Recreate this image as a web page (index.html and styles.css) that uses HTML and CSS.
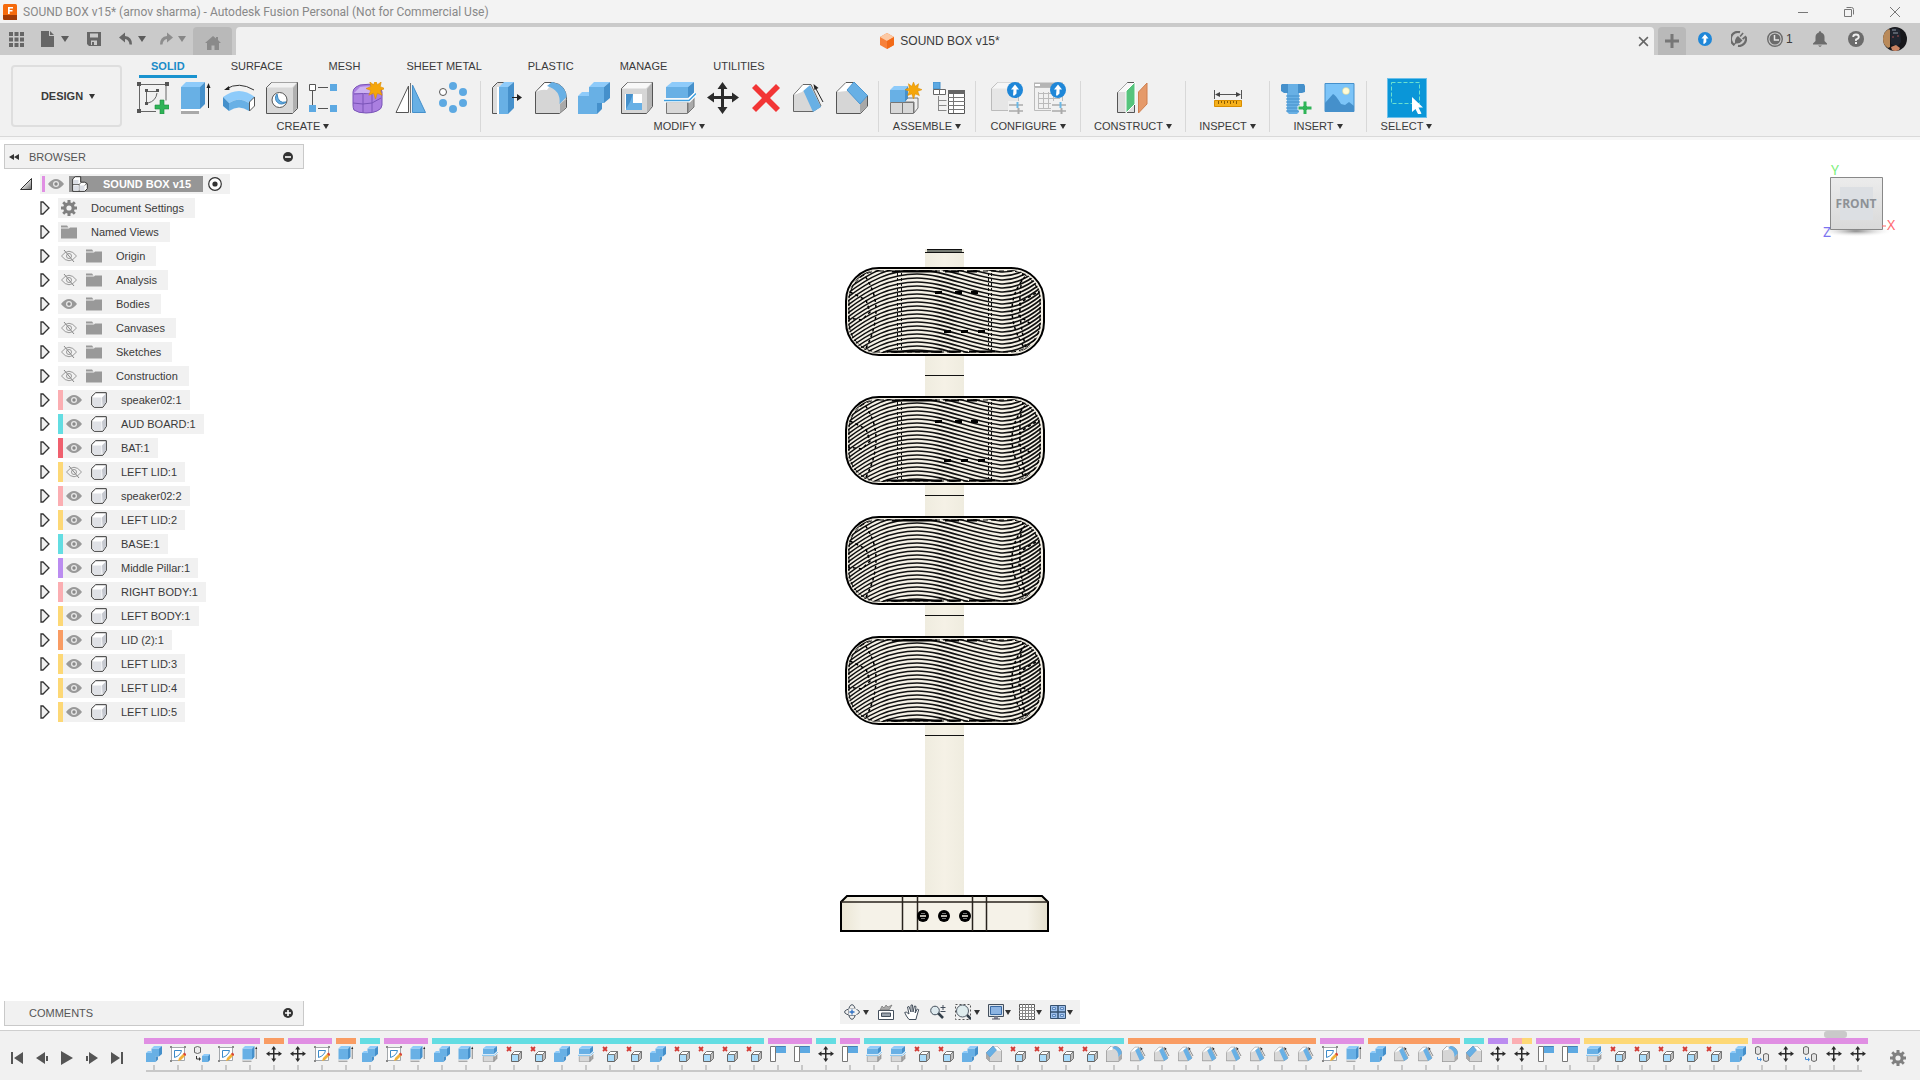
FILE: index.html
```html
<!DOCTYPE html>
<html lang="en">
<head>
<meta charset="utf-8">
<title>SOUND BOX v15* (arnov sharma) - Autodesk Fusion Personal (Not for Commercial Use)</title>
<link rel="stylesheet" href="styles.css">
</head>
<body>
<svg class="sprite" aria-hidden="true">
  <defs>
    <linearGradient id="expandFill" x1="0" y1="0" x2="1" y2="1"><stop offset="0.4" stop-color="#eee"/><stop offset="1" stop-color="#666"/></linearGradient>
  </defs>

  <!-- ribbon, 32 x 32 -->
  <symbol id="r-sketch" viewBox="0 0 32 32">
    <path d="M2.500 2v26M2 2.500h27v16M2 29.500h17" fill="none" stroke="#666"/>
    <path d="M9 9.500h11M9.500 9v12M20 11q-1 8-9 10" fill="none" stroke="#666"/>
    <path d="M0 0h4v4H0zM28 0h4v4h-4zM0 27h4v4H0zM8 7h3v3H8zM19 7h3v3h-3zM8 20h3v3H8z" fill="#555"/>
    <path d="M23 18h4v5h5v4h-5v5h-4v-5h-5v-4h5z" fill="#2fb457" stroke="#1c8a3d" stroke-width=".6"/>
  </symbol>
  <symbol id="r-extrude" viewBox="0 0 32 32">
    <path d="M1 27l5-5h18l-5 5v5H1z" fill="#a9a9a9"/><path d="M1 26h19v3H1z" fill="#fff"/>
    <path d="M1 5h19v22H1z" fill="#68b0e5"/><path d="M1 5l5-5h19l-5 5z" fill="#8ecbfa"/><path d="M20 5l5-5v22l-5 5z" fill="#4590cb"/>
    <path d="M28.500 4v22" stroke="#222"/><path d="M28.500 1l2 5h-4z" fill="#222"/>
  </symbol>
  <symbol id="r-revolve" viewBox="0 0 32 32">
    <path d="M3 7Q16-1 31 8" fill="none" stroke="#333"/><path d="M1 8l5-4 .5 4z" fill="#222"/>
    <path d="M0 15Q16 3 32 15l-6 6Q16 14 6 21z" fill="#8ecbfa"/><path d="M0 15l6 6v8l-6-5z" fill="#4590cb"/>
    <path d="M6 21Q16 14 26 21v8Q16 22 6 29z" fill="#68b0e5"/><path d="M26.500 20l5-5v9l-5 5z" fill="#fff" stroke="#555"/>
  </symbol>
  <symbol id="r-hole" viewBox="0 0 32 32">
    <path d="M.5 5.500l5-5h26v26l-5 5H.5z" fill="#d8d8d8" stroke="#555"/><path d="M1 5.500l5-5h25l-5 5z" fill="#f2f2f2"/><path d="M27 6l4-5v25l-4 5z" fill="#b0b0b0"/>
    <circle cx="13.500" cy="18" r="7.500" fill="#fff" stroke="#555"/><path d="M11 12a6 6 0 1 0 9 8q-8 2-9-8z" fill="#68b0e5" stroke="#3c85bd"/>
  </symbol>
  <symbol id="r-pattern" viewBox="0 0 32 32">
    <path d="M9 5.500h10M3.500 9v14M9 26.500h10" stroke="#555" fill="none"/>
    <path d="M.5 2.500h6v6h-6z" fill="#fff" stroke="#555"/><path d="M21 2h7v7h-7zM0 23h7v7H0zM21 23h7v7h-7z" fill="#5da9e2"/>
  </symbol>
  <symbol id="r-form" viewBox="0 0 32 32">
    <path d="M1 10q0-3 3-5l4-2q9-2 18 1 4 2 4 6v13q0 4-5 6-4 2-11 2-8 0-12-3-1-2-1-5z" fill="#aa7fe0" stroke="#7a54b8"/>
    <path d="M2 11l6-6q9-2 18 1l-6 7q-10-2-18-2z" fill="#cdb2f2"/><path d="M2 12q10-1 18 0v18M11 12v19M1 21q10 2 19 0l9-5M20 12l6-6" fill="none" stroke="#7a54b8"/>
    <use href="#star" x="14" y="-2" width="19" height="19"/>
  </symbol>
  <symbol id="star" viewBox="0 0 20 20"><path d="M10 0l2 5 4-3-1 5 5 2-5 2 2 5-5-2-2 6-2-6-5 2 2-5-5-2 5-2-1-5 4 3z" fill="#f5a60a" stroke="#d98a00" stroke-width=".6"/></symbol>
  <symbol id="r-mirror" viewBox="0 0 32 32">
    <path d="M15.500 1v30" stroke="#777"/><path d="M13.500 4v26.500H1z" fill="#fff" stroke="#555"/><path d="M17.500 3v27.500h13z" fill="#68b0e5" stroke="#4590cb"/>
  </symbol>
  <symbol id="r-circular" viewBox="0 0 32 32">
    <g fill="#5da9e2"><circle cx="15" cy="4" r="4"/><circle cx="25" cy="10" r="4"/><circle cx="25" cy="21" r="4"/><circle cx="15" cy="27" r="4"/><circle cx="5" cy="21" r="4"/></g><circle cx="5" cy="10" r="3.500" fill="#fff" stroke="#555"/>
  </symbol>
  <symbol id="r-press" viewBox="0 0 32 32">
    <path d="M.5 5.500l5-5h7v31H.5z" fill="#ddd" stroke="#555"/><path d="M6 5v27" stroke="#fff" stroke-width="2"/>
    <path d="M7 5h9v27H7z" fill="#68b0e5"/><path d="M7 5l5-5h10l-6 5z" fill="#8ecbfa"/><path d="M16 5l6-5v26l-6 6z" fill="#4590cb"/>
    <path d="M20 15.500h6" stroke="#222"/><path d="M25 12l5 3.500-5 3.500z" fill="#222"/>
  </symbol>
  <symbol id="r-fillet" viewBox="0 0 32 32">
    <path d="M.5 10l9-9.500h8q14 2 14 17v8l-7 6H.5z" fill="#d6d6d6" stroke="#555"/><path d="M1 10l9-9h7l-5 7q-6-1-11 2z" fill="#fff"/><path d="M25 22l6-5v8l-6 6z" fill="#aaa"/>
    <path d="M12 4l5-4q14 3 14.500 15l-7 7Q26 8 12 4z" fill="#68b0e5"/>
  </symbol>
  <symbol id="r-combine" viewBox="0 0 32 32">
    <path d="M0 14h11V5h15v16h-7v11H0z" fill="#68b0e5"/><path d="M0 14l4-4h7v4zM11 5l5-5h16l-6 5z" fill="#8ecbfa"/><path d="M26 5l6-5v16l-6 5zM19 21h5v6l-5 5z" fill="#4590cb"/>
  </symbol>
  <symbol id="r-shell" viewBox="0 0 32 32">
    <path d="M.5 6.500l6-6h25v24l-6 7H.5z" fill="#d6d6d6" stroke="#555"/><path d="M1 6.500l6-6h24l-6 6z" fill="#f8f8f8"/><path d="M26 7l5-6v23l-5 7z" fill="#b4b4b4"/>
    <path d="M4 12h17v16H4z" fill="#fff"/><path d="M5 12h7v9h9v7H5z" fill="#68b0e5"/><path d="M5 12h7l-3 8-4 7z" fill="#4590cb"/>
  </symbol>
  <symbol id="r-split" viewBox="0 0 32 32">
    <path d="M2.500 20h21v11.500H2.500z" fill="#d8d8d8" stroke="#777"/><path d="M24 20l6-6v11l-6 6z" fill="#aaa" stroke="#777"/>
    <path d="M2 5h22v11H2z" fill="#68b0e5"/><path d="M2 5l6-5h22l-6 5z" fill="#8ecbfa"/><path d="M24 5l6-5v11l-6 5z" fill="#4590cb"/>
    <path d="M0 18.500h25l7-7" fill="none" stroke="#fff" stroke-width="4"/><path d="M0 18.500h25l7-7" fill="none" stroke="#3d9fe0" stroke-width="1.500"/>
  </symbol>
  <symbol id="r-move" viewBox="0 0 32 32"><path d="M15.500 0l5 7h-3.500v7h8v-3.500l7 5-7 5V17h-8v8h3.500l-5 7-5-7H14v-8H7v3.500l-7-5 7-5V14h7V7h-3.500z" fill="#2b2b2b"/></symbol>
  <symbol id="r-delete" viewBox="0 0 32 32"><path d="M2 6l4-4 10 10L26 2l4 4-10 10 10 10-4 4-10-10L6 30l-4-4 10-10z" fill="#f23535"/></symbol>
  <symbol id="r-draft" viewBox="0 0 32 32">
    <path d="M.5 13L10 2.500h8L28 24l-8 5.500H.5z" fill="#d8d8d8" stroke="#666"/><path d="M10 8l7-5 11 22-8 5z" fill="#68b0e5"/><path d="M1 13l9-10 7 0-8 7z" fill="#fff"/>
    <path d="M30 20L22.500 6" stroke="#222"/><path d="M20.500 2l5 4-4 2z" fill="#222"/>
  </symbol>
  <symbol id="r-chamfer" viewBox="0 0 32 32">
    <path d="M.5 10L10 .5h8L31.500 14v10l-7 7.500H.5z" fill="#d6d6d6" stroke="#555"/><path d="M1 10l9-9h7l-6 8z" fill="#fff"/><path d="M24 21l7-7v10l-7 7z" fill="#a8a8a8"/><path d="M11 8l7-8 13.500 13.500L24 22z" fill="#68b0e5" stroke="#4d98d2"/>
  </symbol>
  <symbol id="r-newcomp" viewBox="0 0 32 32">
    <path d="M.5 20.500h12v11H.5zM12.500 20.500h11v11h-11z" fill="#d8d8d8" stroke="#777"/><path d="M13 20l5-4h10v10l-4 5V20z" fill="#eee" stroke="#777"/>
    <path d="M0 8h15v12H0z" fill="#68b0e5"/><path d="M0 8l4-4h14l-3 4z" fill="#8ecbfa"/><path d="M15 8l3-4v12l-3 4z" fill="#4590cb"/><use href="#star" x="15" y="0" width="17" height="17"/>
  </symbol>
  <symbol id="r-bom" viewBox="0 0 32 32">
    <path d="M0 0h7v7H0z" fill="#5da9e2" stroke="#4590cb"/><path d="M.5 7.500h6v5h-6zM6.500 7.500h6v5h-6z" fill="#fff" stroke="#666"/><path d="M5.500 14v15M5.500 18.500h8M5.500 23.500h8M5.500 28.500h8" stroke="#888" fill="none"/>
    <path d="M15.500 9.500h16v22h-16z" fill="#fff" stroke="#555"/><path d="M15 8h17v4H15z" fill="#666"/><path d="M15 15.500h17M15 19.500h17M15 23.500h17M15 27.500h17M20.500 12v19" stroke="#777"/>
  </symbol>
  <symbol id="badge-up" viewBox="0 0 16 16"><circle cx="8" cy="8" r="8" fill="#1f87d8"/><path d="M8 2.500l4 5H9.500v4l-2 2H6l.5-6H4z" fill="#fff"/></symbol>
  <symbol id="sliders" viewBox="0 0 14 12"><path d="M0 3h14M0 9h14" stroke="#aaa" stroke-width="1.500"/><path d="M8.500 0v6" stroke="#6ab8e6" stroke-width="2"/><path d="M9.500 6v6" stroke="#aaa" stroke-width="2"/></symbol>
  <symbol id="r-configure" viewBox="0 0 32 32">
    <path d="M.5 6.500l6-6h21v22l-6 6H.5z" fill="#e6e6e6" stroke="#bbb"/><path d="M1 6.500l6-6h20l-6 6z" fill="#f6f6f6"/><use href="#badge-up" x="16" y="0" width="16" height="16"/><path d="M17 19h15v13H17z" fill="#f1f1f1"/><use href="#sliders" x="18" y="20" width="14" height="12"/>
  </symbol>
  <symbol id="r-table" viewBox="0 0 32 32">
    <path d="M0 .5h29v5H0z" fill="#b5b5b5"/><path d="M.5 5.500h28v23H.5zM4 11.500h22M4 16.500h22M4 21.500h16M4 26.500h16M4.500 10v16M9.500 10v16M14.500 10v16M19.500 10v16" fill="none" stroke="#bbb"/><path d="M1 2h5v2H1z" fill="#fff"/><use href="#badge-up" x="16" y="0" width="16" height="16"/><path d="M17 19h15v13H17z" fill="#f1f1f1"/><use href="#sliders" x="18" y="20" width="14" height="12"/>
  </symbol>
  <symbol id="r-plane" viewBox="0 0 32 32">
    <path d="M.5 10.500l10-10h7v30H.5z" fill="#ddd" stroke="#555"/><path d="M1 10l9-9h7l-8 9z" fill="#f8f8f8"/><path d="M9 9l9-9v22l-9 9z" fill="#55c47c" stroke="#fff"/><path d="M21.500 10l8.500-9v21l-8.500 9z" fill="#e59a6a" stroke="#cf7f4e"/>
  </symbol>
  <symbol id="r-measure" viewBox="0 0 32 32">
    <path d="M2.500 8v9M29.500 8v9M4 12.500h24" stroke="#555"/><path d="M3 12.500l5-2.500v5zM29 12.500L24 10v5z" fill="#444"/><path d="M2.500 18.500h27v6h-27z" fill="#f5b01c" stroke="#d98e00"/><path d="M6.500 19v3M9.500 19v2M12.500 19v3M15.500 19v2M18.500 19v3M21.500 19v2M24.500 19v3" stroke="#8a5c00"/>
  </symbol>
  <symbol id="r-bolt" viewBox="0 0 32 32">
    <path d="M1 2h22l1 2v6l-3 1H3L0 9V3z" fill="#4590cb"/><path d="M7 2h10v9H7z" fill="#68b0e5"/><path d="M6 11h12v19l-2 2H8l-2-2z" fill="#68b0e5"/><path d="M5 14h14M5 17h14M5 20h14M5 23h14M5 26h14M5 29h13" stroke="#4590cb"/>
    <path d="M22 19h4v5h5v4h-5v5h-4v-5h-5v-4h5z" fill="#2fb457" stroke="#f1f1f1"/>
  </symbol>
  <symbol id="r-image" viewBox="0 0 32 32"><path d="M1 1.500h29v28H1z" fill="#7cc4f8" stroke="#4590cb"/><circle cx="22" cy="9" r="3.500" fill="#fffbd6" stroke="#d8d08a" stroke-width=".5"/><path d="M1 21l8-9q2 0 8 10l4 1 4-3 5 4v6H1z" fill="#4590cb"/></symbol>
  <symbol id="r-select" viewBox="0 0 32 32"><path d="M.5 .5h28v21H.5z" fill="none" stroke="#6be0cf" stroke-dasharray="4 2"/><path d="M21 15v15l3.500-3 3 6 3-1.500-3-6h4.500z" fill="#fff"/></symbol>

  <!-- application bar and panels -->
  <symbol id="a-logo" viewBox="0 0 14 16"><path d="M0 1.500Q0 0 1.500 0h11Q14 0 14 1.500V16H1.500Q0 16 0 14.500z" fill="#f56a0c"/><path d="M0 11h14v5H1.500Q0 16 0 14z" fill="#a13a05"/><path d="M5 3h5v1.500H6.700v1.500H9.500v1.500H6.700V10H5z" fill="#fff"/></symbol>
  <symbol id="a-grid" viewBox="0 0 15 15"><path d="M0 0h4v4H0zM5.500 0h4v4h-4zM11 0h4v4h-4zM0 5.500h4v4H0zM5.500 5.500h4v4h-4zM11 5.500h4v4h-4zM0 11h4v4H0zM5.500 11h4v4h-4zM11 11h4v4h-4z" fill="#666"/></symbol>
  <symbol id="a-file" viewBox="0 0 14 16"><path d="M0 0h8v5h5v11H0z" fill="#666"/><path d="M9 0l4 4H9z" fill="#666"/></symbol>
  <symbol id="a-save" viewBox="0 0 14 14"><path d="M0 0h14v14H2l-2-2z" fill="#666"/><path d="M3 1.500h8v4H3zM4 8.500h6V13H4z" fill="#cacaca"/><path d="M5 10h2v3H5z" fill="#666"/></symbol>
  <symbol id="a-undo" viewBox="0 0 14 13"><path d="M0 5l6-5v3.500Q13 4 13 12h-2.500Q10 7 6 6.500V10z" fill="#666"/></symbol>
  <symbol id="a-home" viewBox="0 0 16 14"><path d="M8 0l3 2.500V1h2v3l3 3h-2v7H9.500V9.500h-3V14H2V7H0z" fill="#8a8a8a"/></symbol>
  <symbol id="a-cube" viewBox="0 0 14 16"><path d="M7 0l7 4v8l-7 4-7-4V4z" fill="#f7813a"/><path d="M7 0l7 4-7 4-7-4z" fill="#fcc9a4"/><path d="M7 8l7-4v8l-7 4z" fill="#f26a18"/></symbol>
  <symbol id="a-close" viewBox="0 0 10 10"><path d="M1 1l8 8M9 1L1 9" stroke="currentColor" stroke-width="1.400"/></symbol>
  <symbol id="a-plus" viewBox="0 0 14 14"><path d="M5.500 0h3v5.500H14v3H8.500V14h-3V8.500H0v-3h5.500z" fill="#777"/></symbol>
  <symbol id="a-plug" viewBox="0 0 16 16"><path d="M3.500 14A7 7 0 0 1 9 1.200M14.700 6A7 7 0 0 1 7 14.900" fill="none" stroke="#6b6b6b" stroke-width="2.200"/><path d="M2 14.500l2-3q-.5-4 3-6.500l4.500 4.500q-2.500 3.500-6.500 3l-2 2zM8.500 5l3-3.500 1.200 1-3 3.500zM11 7.500l3.500-3 1 1.200-3.300 3z" fill="#6b6b6b"/></symbol>
  <symbol id="a-clock" viewBox="0 0 16 16"><circle cx="8" cy="8" r="7.300" fill="none" stroke="#6b6b6b" stroke-width="1.400"/><circle cx="8" cy="8" r="5.500" fill="#6b6b6b"/><path d="M7.500 4v5H12" fill="none" stroke="#e5e5e5" stroke-width="1.500"/></symbol>
  <symbol id="a-bell" viewBox="0 0 14 16"><path d="M7 0q1 0 1.200 1.500Q11.500 2.500 11.500 6v4L14 12.500v1H0v-1L2.500 10V6q0-3.500 3.300-4.500Q6 0 7 0zM5 14.500h4L7 16z" fill="#6b6b6b"/></symbol>
  <symbol id="a-help" viewBox="0 0 16 16"><circle cx="8" cy="8" r="8" fill="#6b6b6b"/><path d="M5.200 6Q5.200 3.500 8 3.500T10.800 6Q10.800 7.500 8 8.500v1.500" fill="none" stroke="#eee" stroke-width="1.800"/><path d="M7 11h2v2H7z" fill="#eee"/></symbol>
  <symbol id="a-avatar" viewBox="0 0 24 24"><circle cx="12" cy="12" r="12" fill="#17171b"/><path d="M6 2Q0 5 0 12q0 6 5 9l2-1V3z" fill="#b98a5a"/><path d="M7 3q5-4 10 0l1 12-4 5-6-3z" fill="#20252f"/><path d="M8 20l5-2 4 3-1 2q-4 2-7 0z" fill="#c98462"/><path d="M9 3h4M10 6h5" stroke="#8f99a5"/><path d="M9 10h2M14 9h2" stroke="#a44c4c"/></symbol>
  <symbol id="p-collapse" viewBox="0 0 10 6"><path d="M5 0v6L0 3zM10 0v6L5 3z" fill="#333"/></symbol>
  <symbol id="p-minus" viewBox="0 0 10 10"><circle cx="5" cy="5" r="5" fill="#333"/><path d="M2 4.200h6v1.600H2z" fill="#fff"/></symbol>
  <symbol id="p-plus" viewBox="0 0 10 10"><circle cx="5" cy="5" r="5" fill="#333"/><path d="M2 4.200h6v1.600H2zM4.200 2h1.600v6H4.200z" fill="#fff"/></symbol>

  <!-- browser tree -->
  <symbol id="t-open" viewBox="0 0 12 12"><path d="M11.500 .5v11H.5z" fill="url(#expandFill)" stroke="#333"/></symbol>
  <symbol id="t-shut" viewBox="0 0 10 14"><path d="M1 1h2l6 6-6 6H1z" fill="#f0f0f0" stroke="#333" stroke-width="1.300"/></symbol>
  <symbol id="t-eye" viewBox="0 0 16 10"><path d="M0 5Q8-5 16 5 8 15 0 5z" fill="#999"/><circle cx="8" cy="5" r="3" fill="#e8e8e8"/><circle cx="8" cy="5" r="1.700" fill="#888"/></symbol>
  <symbol id="t-hidden" viewBox="0 0 16 12"><path d="M.5 6Q8-3.500 15.500 6 8 15.500 .5 6z" fill="none" stroke="#999"/><circle cx="8" cy="6" r="2.500" fill="none" stroke="#999"/><path d="M3 0l10 12" stroke="#888"/></symbol>
  <symbol id="t-folder" viewBox="0 0 16 13"><path d="M0 0h6l1.500 2H0zM0 3h8l1-1h7v11H0z" fill="#999"/></symbol>
  <symbol id="t-gear" viewBox="0 0 16 16"><path d="M6.500 0h3v2.500l1.500.6 1.800-1.800 2 2L13 5l.6 1.500H16v3h-2.400L13 11l1.800 1.800-2 2L11 13l-1.500.6V16h-3v-2.400L5 13l-1.800 1.800-2-2L3 11l-.6-1.500H0v-3h2.400L3 5 1.200 3.200l2-2L5 3.100l1.500-.6z" fill="#808080"/><circle cx="8" cy="8" r="2.600" fill="#f0f0f0"/></symbol>
  <symbol id="t-body" viewBox="0 0 16 16"><path d="M.7 4.500l4-3.800h10.600v9.800l-3.500 4.800H3.200L.7 13z" fill="#fff" stroke="#333"/><path d="M2 5.500h8.500v9H3.500L2 13z" fill="#dfe1e6"/><path d="M11 5.500l4-4v9l-3.500 4z" fill="#c6c9d0"/></symbol>
  <symbol id="t-assembly" viewBox="0 0 16 16"><path d="M.7 3l2.500-2.300h5.500v5.500h4l2.600 1.500v5l-2.600 2.600H.7z" fill="#fff" stroke="#333"/><path d="M.7 8.500h6.500v6.800M7.200 8.500l1.800-2M12.500 9.500l2.500-2" fill="none" stroke="#333" stroke-width=".7"/><path d="M1.500 4h5v4h-5zM1.500 9.500h5v5h-5zM7.500 9.500h5v5h-5z" fill="#dcdfe6"/></symbol>
  <symbol id="t-radio" viewBox="0 0 14 14"><circle cx="7" cy="7" r="6.300" fill="#fff" stroke="#333" stroke-width="1.200"/><circle cx="7" cy="7" r="2.600" fill="#333"/></symbol>

  <!-- navigation bar, 16 x 16 -->
  <symbol id="n-orbit" viewBox="0 0 16 16"><ellipse cx="8" cy="8" rx="3.500" ry="7.300" fill="none" stroke="#444f5c"/><ellipse cx="8" cy="8" rx="7.400" ry="3.200" fill="none" stroke="#444f5c"/><path d="M4.500 4.500h8v6.500h-8z" fill="#f1f1f1"/><path d="M8 5.500v5M5.500 8h5" stroke="#2c6fc4" stroke-width="1.300"/></symbol>
  <symbol id="n-look" viewBox="0 0 16 16"><path d="M.5 6.500h15v9H.5z" fill="#fff" stroke="#444f5c"/><path d="M3.500 9h9v3.500h-9z" fill="#9aa3ad" stroke="#444f5c"/><path d="M2 6l2-4 2 2 2-3 2 2 4-2-3 5z" fill="#aaa" stroke="#666" stroke-width=".6"/></symbol>
  <symbol id="n-pan" viewBox="0 0 16 16"><path d="M5 15.500Q2 12 .7 8.500l1.500-.5L5 10 3.500 3l1.500-.5L7 8V1h1.500l.5 7 1.500-6 1.500.4L11.200 9l2-4 1.500.7L12.500 13l-.5 2.500z" fill="#fff" stroke="#444f5c"/></symbol>
  <symbol id="n-zoom" viewBox="0 0 16 16"><path d="M8 9l5 5" stroke="#333f4a" stroke-width="2.600"/><circle cx="5" cy="6.500" r="4.300" fill="#dde9ee" stroke="#444f5c"/><path d="M10.500 3.500h5M13 1v5M10.500 7.500h5" stroke="#444f5c"/></symbol>
  <symbol id="n-fit" viewBox="0 0 16 16"><path d="M.5 .5h15v15H.5z" fill="none" stroke="#555" stroke-dasharray="2 2"/><path d="M11 10l5 5" stroke="#333f4a" stroke-width="2.600"/><circle cx="7.500" cy="7" r="6" fill="#dfecee" stroke="#555f6a"/></symbol>
  <symbol id="n-display" viewBox="0 0 16 16"><path d="M.5 .5h15v12H.5z" fill="#dce3ea" stroke="#444f5c"/><path d="M2.500 2.500h11v8h-11z" fill="#8db4e3" stroke="#3a6aa5"/><path d="M6 12.500h4v2.500H6z" fill="#889"/><path d="M4 15h8" stroke="#556"/></symbol>
  <symbol id="n-grid" viewBox="0 0 16 16"><path d="M.5 .5h15v15H.5z" fill="#fff" stroke="#555"/><path d="M3.500 0v16M6.500 0v16M9.500 0v16M12.500 0v16M0 3.500h16M0 6.500h16M0 9.500h16M0 12.500h16" stroke="#888"/></symbol>
  <symbol id="n-views" viewBox="0 0 16 14"><path d="M.5 .5h15v13H.5z" fill="#9ec0ec" stroke="#35506f"/><path d="M8 0v14M0 7h16" stroke="#35506f" stroke-width="1.500"/><path d="M2.500 2.500h3v2h-3zM10.500 2.500h3v2h-3zM2.500 9.500h3v2h-3zM10.500 9.500h3v2h-3z" fill="#c5dbf5" stroke="#5c87bd"/></symbol>

  <!-- timeline, 16 x 16 -->
  <symbol id="f-sketch" viewBox="0 0 16 16"><path d="M1.500 1.500h13v13h-13z" fill="#fff" stroke="#a3a7ab"/><path d="M4.500 4.500h7q-1 5-7 7z" fill="none" stroke="#3a8ac9"/><path d="M0 0h2v2H0zM14 0h2v2h-2zM0 14h2v2H0z" fill="#888"/><path d="M9 12l5-5 2 2-5 5-3 1z" fill="#f2b23a"/><path d="M13 8l1.500-1.500 2 2L15 10z" fill="#d8463c"/></symbol>
  <symbol id="f-copy" viewBox="0 0 16 16"><path d="M.5 1.500q3-2 6 0v5q-3 2-6 0z" fill="#ececec" stroke="#666"/><path d="M2.500 10v3h3" fill="none" stroke="#333"/><path d="M5 11l2 2-2 2z" fill="#333"/><path d="M8 10h6v6H8z" fill="#68b0e5"/><path d="M8 10l2-2h6l-2 2z" fill="#8ecbfa"/><path d="M14 10l2-2v6l-2 2z" fill="#4590cb"/></symbol>
  <symbol id="f-remove" viewBox="0 0 16 16"><path d="M1 1l4 4M5 1L1 5" stroke="#d33a34" stroke-width="1.800"/><path d="M5.500 8.500h7v7h-7z" fill="#a9dcfb" stroke="#666"/><path d="M5.500 8.500l3-3h7l-3 3z" fill="#fff" stroke="#777"/><path d="M12.500 8.500l3-3v7l-3 3z" fill="#bbb" stroke="#777"/></symbol>
  <symbol id="f-plane" viewBox="0 0 16 16"><path d="M.5 .5h5v15h-5z" fill="#fff" stroke="#777"/><path d="M6 0h10v7H6z" fill="#5da9e2"/><path d="M5.500 .5h10" stroke="#4380b3"/></symbol>
  <symbol id="f-joint" viewBox="0 0 16 16"><path d="M1.500 1.500q2.500-2 5 0v6q-2.500 2-5 0zM9.500 8.500q2.500-2 5 0v6q-2.500 2-5 0z" fill="#e4e4e4" stroke="#666"/><path d="M3.500 11v2.500h3" fill="none" stroke="#4a8fd8"/><path d="M6 11.500l2 2-2 2z" fill="#4a8fd8"/></symbol>
  <symbol id="f-first" viewBox="0 0 12 12"><path d="M0 0h2v12H0zM12 0v12L3 6z" fill="#555"/></symbol>
  <symbol id="f-back" viewBox="0 0 12 12"><path d="M9 0v12L0 6zM10 4h2v5h-2z" fill="#555"/></symbol>
  <symbol id="f-play" viewBox="0 0 12 14"><path d="M0 0l12 7-12 7z" fill="#555"/></symbol>
</svg>

<header class="titlebar">
  <svg class="titlebar-logo"><use href="#a-logo"/></svg>
  <span class="titlebar-text">SOUND BOX v15* (arnov sharma) - Autodesk Fusion Personal (Not for Commercial Use)</span>
  <div class="window-controls">
    <button aria-label="Minimize"><svg viewBox="0 0 10 10"><path d="M0 5.500h10" stroke="#777"/></svg></button>
    <button aria-label="Restore"><svg viewBox="0 0 10 10"><path d="M.5 2.500h7v7h-7zM2.500 .5h5q2 0 2 2v5" fill="none" stroke="#777"/></svg></button>
    <button aria-label="Close"><svg viewBox="0 0 10 10"><path d="M0 0l10 10M10 0L0 10" stroke="#777"/></svg></button>
  </div>
</header>

<div class="appbar">
  <div class="quick">
    <button aria-label="Show data panel"><svg class="i15"><use href="#a-grid"/></svg></button>
    <button aria-label="File" class="quick-file"><svg class="i16"><use href="#a-file"/></svg><span class="caret"></span></button>
    <button aria-label="Save" class="quick-save"><svg class="i14"><use href="#a-save"/></svg></button>
    <button aria-label="Undo"><svg class="i14"><use href="#a-undo"/></svg><span class="caret"></span></button>
    <button aria-label="Redo" class="redo" disabled><svg class="i14"><use href="#a-undo"/></svg><span class="caret"></span></button>
  </div>
  <button class="home-tab" aria-label="Home"><svg class="i16"><use href="#a-home"/></svg></button>
  <div class="doc-tab">
    <span class="doc-name"><svg class="i16"><use href="#a-cube"/></svg>SOUND BOX v15*</span>
    <button class="doc-close" aria-label="Close document"><svg class="i11"><use href="#a-close"/></svg></button>
  </div>
  <button class="new-tab" aria-label="New document"><svg class="i14"><use href="#a-plus"/></svg></button>
  <div class="account">
    <button aria-label="Updates"><svg class="i14"><use href="#badge-up"/></svg></button>
    <button aria-label="Extensions"><svg class="i16"><use href="#a-plug"/></svg></button>
    <button aria-label="Job status" class="jobs"><svg class="i16"><use href="#a-clock"/></svg>1</button>
    <button aria-label="Notifications"><svg class="i16"><use href="#a-bell"/></svg></button>
    <button aria-label="Help"><svg class="i16"><use href="#a-help"/></svg></button>
    <button aria-label="Account" class="avatar"><svg><use href="#a-avatar"/></svg></button>
  </div>
</div>

<section class="ribbon">
  <button class="workspace">DESIGN<span class="caret"></span></button>
  <div class="ribbon-main">
    <nav class="modes">
      <button class="mode is-active">SOLID</button><button class="mode">SURFACE</button><button class="mode">MESH</button><button class="mode">SHEET METAL</button><button class="mode">PLASTIC</button><button class="mode">MANAGE</button><button class="mode">UTILITIES</button>
    </nav>
    <div class="groups">
      <div class="group">
        <div class="tools">
          <button aria-label="Create Sketch"><svg><use href="#r-sketch"/></svg></button><button aria-label="Extrude"><svg><use href="#r-extrude"/></svg></button><button aria-label="Revolve"><svg><use href="#r-revolve"/></svg></button><button aria-label="Hole"><svg><use href="#r-hole"/></svg></button><button aria-label="Rectangular Pattern"><svg><use href="#r-pattern"/></svg></button><button aria-label="Create Form"><svg><use href="#r-form"/></svg></button><button aria-label="Mirror"><svg><use href="#r-mirror"/></svg></button><button aria-label="Circular Pattern"><svg><use href="#r-circular"/></svg></button>
        </div>
        <button class="caption">CREATE<span class="caret"></span></button>
      </div>
      <div class="group">
        <div class="tools">
          <button aria-label="Press Pull"><svg><use href="#r-press"/></svg></button><button aria-label="Fillet"><svg><use href="#r-fillet"/></svg></button><button aria-label="Combine"><svg><use href="#r-combine"/></svg></button><button aria-label="Shell"><svg><use href="#r-shell"/></svg></button><button aria-label="Split Body"><svg><use href="#r-split"/></svg></button><button aria-label="Move/Copy"><svg><use href="#r-move"/></svg></button><button aria-label="Delete"><svg><use href="#r-delete"/></svg></button><button aria-label="Draft"><svg><use href="#r-draft"/></svg></button><button aria-label="Chamfer"><svg><use href="#r-chamfer"/></svg></button>
        </div>
        <button class="caption">MODIFY<span class="caret"></span></button>
      </div>
      <div class="group">
        <div class="tools"><button aria-label="New Component"><svg><use href="#r-newcomp"/></svg></button><button aria-label="Bill of Materials"><svg><use href="#r-bom"/></svg></button></div>
        <button class="caption">ASSEMBLE<span class="caret"></span></button>
      </div>
      <div class="group group--wide">
        <div class="tools"><button aria-label="Configure"><svg><use href="#r-configure"/></svg></button><button aria-label="Configuration Table"><svg><use href="#r-table"/></svg></button></div>
        <button class="caption">CONFIGURE<span class="caret"></span></button>
      </div>
      <div class="group group--wide">
        <div class="tools"><button aria-label="Offset Plane"><svg><use href="#r-plane"/></svg></button></div>
        <button class="caption">CONSTRUCT<span class="caret"></span></button>
      </div>
      <div class="group group--narrow">
        <div class="tools"><button aria-label="Measure"><svg><use href="#r-measure"/></svg></button></div>
        <button class="caption">INSPECT<span class="caret"></span></button>
      </div>
      <div class="group">
        <div class="tools"><button aria-label="Insert Fastener"><svg><use href="#r-bolt"/></svg></button><button aria-label="Insert Canvas"><svg><use href="#r-image"/></svg></button></div>
        <button class="caption">INSERT<span class="caret"></span></button>
      </div>
      <div class="group group--last">
        <div class="tools"><button aria-label="Select" class="select-tool"><svg><use href="#r-select"/></svg></button></div>
        <button class="caption">SELECT<span class="caret"></span></button>
      </div>
    </div>
  </div>
</section>

<main class="workarea">
  <aside class="browser">
    <div class="panel-head"><button aria-label="Collapse"><svg class="i10"><use href="#p-collapse"/></svg></button><span>BROWSER</span><button aria-label="Minimize panel"><svg class="i10"><use href="#p-minus"/></svg></button></div>
    <ul class="tree" id="tree">
      <li class="root"><svg class="i12"><use href="#t-open"/></svg><div class="node"><i class="bar magenta"></i><svg class="i16"><use href="#t-eye"/></svg><span class="root-name"><svg class="i18"><use href="#t-assembly"/></svg>SOUND BOX v15</span><svg class="i14"><use href="#t-radio"/></svg></div></li>
    </ul>
  </aside>

  <svg class="model" viewBox="0 0 215 700" role="img" aria-label="Front view of the sound box">
    <defs>
      <linearGradient id="pillar"><stop offset="0" stop-color="#efecdf"/><stop offset=".5" stop-color="#f5f1e6"/><stop offset="1" stop-color="#efecdf"/></linearGradient>
      <linearGradient id="base"><stop offset="0" stop-color="#ebe6d4"/><stop offset=".1" stop-color="#f5f2e8"/><stop offset=".9" stop-color="#f5f2e8"/><stop offset="1" stop-color="#e4dfcc"/></linearGradient>
      <clipPath id="grille"><rect x="11" y="30" width="193" height="83" rx="30"/></clipPath>
      <path id="wave" d="M6 31C32 10 54 0 80 0S132 14 164 18Q184 19 208 -2" fill="none" stroke="#111" stroke-width="1.600"/>
      <g id="wave2"><use href="#wave"/><use href="#wave" y="4"/></g>
      <g id="wave4"><use href="#wave2"/><use href="#wave2" y="8"/></g>
      <g id="wave8"><use href="#wave4"/><use href="#wave4" y="16"/></g>
      <g id="wave16"><use href="#wave8"/><use href="#wave8" y="32"/></g>
      <g id="speaker">
        <rect x="9" y="28" width="198" height="87" rx="33" fill="#f5f1e6" stroke="#000" stroke-width="2"/>
        <g clip-path="url(#grille)">
          <use href="#wave16" y="-2"/><use href="#wave16" y="62"/>
          <g fill="none" stroke="#000" stroke-width="1.500"><path d="M25 32q14 18 14 38T27 112M13 52l16 8 4 12-8 8-14-2" stroke-dasharray="3 3"/><path d="M192 32q-17 18-17 38t15 42M186 33q-8 40 4 78M204 50l-20 12-2 14 12 8" stroke-dasharray="3 3"/></g>
        </g>
        <rect x="12" y="31" width="191" height="81" rx="30" fill="none" stroke="#000" stroke-dasharray="5 3"/>
        <path d="M55 31.500h45M108 31.500h14M130 31.500h10M50 111.500h55M112 111.500h12M132 111.500h26" stroke="#000" stroke-width="2"/>
      </g>
      <g id="ribs"><path d="M60.500 33v77M64.500 33v77M151.500 33v77M154.500 33v77" stroke="#111" stroke-dasharray="3 2"/><path d="M98 52.500h7M118 52.500h7M134 52.500h7M107 91.500h7M124 91.500h7M141 91.500h7" stroke="#000" stroke-width="3"/></g>
      <g id="port"><circle r="6" fill="#000"/><path d="M-3 0h6" stroke="#f5f1e6" stroke-width="1.500"/><path d="M-2 -2.500h4M-2 2.500h4" stroke="#777"/></g>
    </defs>
    <path d="M88 9h39v647H88z" fill="url(#pillar)"/>
    <path d="M90 9h35v3H90z" fill="#777c74"/><path d="M90 9.500h35M88 12.500h39M88 135.500h39M88 255.500h39M88 375.500h39M88 495.500h39" stroke="#111"/>
    <use href="#speaker"/><use href="#ribs"/>
    <use href="#speaker" y="129"/><use href="#ribs" y="129"/>
    <use href="#speaker" y="249"/>
    <use href="#speaker" y="369"/>
    <path d="M10 656h195l6 6v29H4v-29z" fill="url(#base)" stroke="#000" stroke-width="2"/>
    <path d="M4 662h207M65.500 656v35M80.500 656v35M135.500 656v35M149.500 656v35" fill="none" stroke="#28231d" stroke-width="1.500"/>
    <use href="#port" x="86" y="676"/><use href="#port" x="107" y="676"/><use href="#port" x="128" y="676"/>
  </svg>

  <svg class="viewcube" viewBox="0 0 84 90" role="img" aria-label="View cube">
    <defs><linearGradient id="face" x1="0" y1="0" x2="0" y2="1"><stop offset="0" stop-color="#ececec"/><stop offset="1" stop-color="#d9d9d9"/></linearGradient><radialGradient id="shade"><stop offset="0" stop-color="#888"/><stop offset="1" stop-color="#fff" stop-opacity="0"/></radialGradient></defs>
    <ellipse cx="36" cy="71" rx="38" ry="6" fill="url(#shade)"/>
    <path d="M10.500 17.500h52v52h-52z" fill="url(#face)" stroke="#888"/><path d="M20 27h33v33H20z" fill="#dcdfe3"/>
    <text x="36" y="48" class="cube-face">FRONT</text>
    <text x="15" y="15" class="axis axis-y">Y</text><text x="7" y="77" class="axis axis-z">Z</text><text x="71" y="70" class="axis axis-x">X</text><path d="M62 66h4" stroke="#f66"/>
  </svg>
</main>

<div class="dock">
  <div class="comments"><span>COMMENTS</span><button aria-label="Expand comments"><svg class="i10"><use href="#p-plus"/></svg></button></div>
  <nav class="navbar">
    <button aria-label="Orbit" class="nav-menu nav-menu--wide"><svg class="i16"><use href="#n-orbit"/></svg><span class="caret"></span></button>
    <button aria-label="Look At"><svg class="i16"><use href="#n-look"/></svg></button>
    <button aria-label="Pan"><svg class="i16"><use href="#n-pan"/></svg></button>
    <button aria-label="Zoom"><svg class="i16"><use href="#n-zoom"/></svg></button>
    <button aria-label="Fit" class="nav-menu nav-menu--wide"><svg class="i16"><use href="#n-fit"/></svg><span class="caret"></span></button>
    <button aria-label="Display Settings" class="nav-menu"><svg class="i16"><use href="#n-display"/></svg><span class="caret"></span></button>
    <button aria-label="Grid and Snaps" class="nav-menu"><svg class="i16"><use href="#n-grid"/></svg><span class="caret"></span></button>
    <button aria-label="Viewports" class="nav-menu"><svg class="i16"><use href="#n-views"/></svg><span class="caret"></span></button>
  </nav>
</div>

<footer class="timeline">
  <div class="playback">
    <button aria-label="Go to start"><svg class="i12"><use href="#f-first"/></svg></button>
    <button aria-label="Step back"><svg class="i12"><use href="#f-back"/></svg></button>
    <button aria-label="Play"><svg class="i14"><use href="#f-play"/></svg></button>
    <button aria-label="Step forward"><svg class="i12 flip"><use href="#f-back"/></svg></button>
    <button aria-label="Go to end"><svg class="i12 flip"><use href="#f-first"/></svg></button>
  </div>
  <div class="history">
    <div class="strips" id="strips"></div>
    <div class="features" id="features"></div>
    <div class="rail"></div>
  </div>
  <button class="settings" aria-label="Timeline settings"><svg class="i16"><use href="#t-gear"/></svg></button>
  <span class="scroll-thumb"></span>
</footer>
<script src="app.js"></script>
</body>
</html>
```
FILE: styles.css
```css
* { box-sizing: border-box; }
body {
  margin: 0;
  min-height: 100vh;
  display: flex;
  flex-direction: column;
  background: #fff;
  color: #3a3a3a;
  font: 11px/16px "Liberation Sans", Arial, sans-serif;
}
button {
  display: flex;
  align-items: center;
  justify-content: center;
  margin: 0;
  padding: 0;
  border: 0;
  background: none;
  color: inherit;
  font: inherit;
}
svg { display: block; flex: none; }
.sprite { position: absolute; width: 0; height: 0; }
.i10 { width: 10px; height: 10px; }
.i11 { width: 11px; height: 11px; }
.i12 { width: 12px; height: 12px; }
.i14 { width: 14px; height: 14px; }
.i15 { width: 15px; height: 15px; }
.i16 { width: 16px; height: 16px; }
.i18 { width: 18px; height: 16px; }
.flip { transform: scaleX(-1); }
.caret {
  flex: none;
  border: solid transparent;
  border-width: 5px 3px 0;
  border-top-color: #333;
}

/* title bar */
.titlebar {
  display: flex;
  align-items: center;
  height: 23px;
  padding-left: 3px;
  background: #f3f3f3;
}
.titlebar-logo { width: 14px; height: 16px; }
.titlebar-text {
  flex: 1;
  margin-left: 6px;
  color: #888;
  font: 12px/16px Roboto, "Open Sans", sans-serif;
}
.window-controls { display: flex; padding-right: 2px; }
.window-controls button { width: 46px; height: 20px; }
.window-controls svg { width: 10px; height: 10px; }

/* application bar */
.appbar {
  display: flex;
  align-items: flex-end;
  height: 32px;
  background: #cacaca;
}
.quick {
  display: flex;
  align-items: center;
  width: 193px;
  height: 32px;
  padding-left: 9px;
}
.quick button { gap: 5px; }
.quick .caret { border-width: 6px 4px 0; border-top-color: #5c5c5c; }
.quick-file { margin-left: 16px; }
.quick-save { margin: 0 18px; }
.redo { margin-left: 13px; opacity: .6; }
.redo svg { transform: scaleX(-1); }
.home-tab {
  width: 39px;
  height: 28px;
  padding-top: 4px;
  border-radius: 4px 4px 0 0;
  background: #b9b9b9;
}
.doc-tab {
  display: flex;
  align-items: center;
  flex: 1;
  height: 28px;
  margin-left: 4px;
  padding-right: 5px;
  border-radius: 4px 4px 0 0;
  background: #f1f1f1;
}
.doc-name {
  display: flex;
  align-items: center;
  justify-content: center;
  gap: 5px;
  flex: 1;
  padding-left: 6px;
  font-size: 12px;
}
.doc-close { width: 12px; height: 20px; color: #666; }
.new-tab {
  width: 28px;
  height: 28px;
  margin-left: 4px;
  border-radius: 4px 4px 0 0;
  background: #b9b9b9;
}
.account {
  display: flex;
  align-items: center;
  justify-content: space-between;
  width: 234px;
  height: 32px;
  padding: 0 13px 0 12px;
}
.jobs { gap: 3px; font-size: 12px; }
.avatar svg { width: 24px; height: 24px; }

/* ribbon */
.ribbon {
  display: flex;
  height: 85px;
  border-bottom: 3px solid #f6f6f6;
  background: #f1f1f1;
  box-shadow: inset 0 -1px #d9d9d9;
}
.workspace {
  gap: 6px;
  width: 111px;
  height: 62px;
  margin: 10px 4px 0 11px;
  padding-left: 3px;
  border: 2px solid #dedede;
  border-radius: 4px;
  font-weight: bold;
}
.modes { display: flex; gap: 22px; margin-left: 13px; }
.mode {
  height: 23px;
  padding: 2px 12px 0;
  border-bottom: 3px solid transparent;
}
.mode.is-active { border-color: #1a93cf; color: #1a8bc8; font-weight: bold; }
.groups { display: flex; }
.group {
  padding: 0 6px 0 5px;
  background: linear-gradient(#d8d8d8, #d8d8d8) right 3px / 1px 51px no-repeat;
}
.group--wide { width: 105px; }
.group--narrow { width: 84px; }
.group--last { width: 80px; background: none; }
.tools { display: flex; justify-content: center; }
.tools button { width: 43px; height: 40px; }
.tools svg { width: 32px; height: 32px; overflow: visible; }
.tools .select-tool { width: 40px; background: #0a96d8; border: 1px solid #6cc0ea; }
.caption { gap: 3px; width: 100%; }

/* work area */
.workarea {
  flex: 1;
  display: grid;
  grid-template-columns: 308px 1fr 339px;
  align-items: start;
}
.browser { padding: 4px; }
.panel-head, .comments {
  display: flex;
  align-items: center;
  width: 300px;
  height: 25px;
  padding: 0 10px 0 4px;
  border: 1px solid #c9c9c9;
  background: #f1f1f1;
  color: #555;
}
.panel-head span { flex: 1; margin-left: 10px; }
.tree { margin: 5px 0 0; padding: 0; list-style: none; }
.tree li { display: flex; align-items: center; height: 20px; margin: 0 0 4px 36px; }
.tree .root { margin-left: 16px; }
.expander { width: 10px; height: 14px; }
.node {
  display: flex;
  align-items: center;
  gap: 9px;
  height: 20px;
  margin-left: 8px;
  padding: 0 11px 0 3px;
  background: #f1f1f1;
}
.node--part { padding: 0 8px 0 0; }
.node span { margin-left: 5px; }
.node .bar + svg { margin-left: -6px; }
.bar { width: 5px; height: 20px; }
.root .node { gap: 5px; margin-left: 8px; padding: 0 8px 0 2px; }
.root .bar { width: 3px; height: 16px; }
.root .node .bar + svg { margin-left: -2px; }
.root .node .root-name {
  display: flex;
  align-items: center;
  gap: 14px;
  width: 134px;
  height: 16px;
  margin: 0;
  padding-left: 2px;
  background: #969696;
  color: #fff;
  font-weight: bold;
}
.magenta { background: #e08fe3; }
.cyan { background: #63dde2; }
.orange { background: #f99c63; }
.purple { background: #bb8cf0; }
.pink { background: #fbaeb2; }
.yellow { background: #fdd876; }
.red { background: #f0606e; }
.mixed { background: linear-gradient(90deg, #fbaeb2 50%, #fdd876 50%); }

.model { width: 215px; height: 700px; margin-top: 100px; justify-self: center; }
.viewcube { width: 84px; height: 90px; margin: 20px 16px 0 0; justify-self: end; overflow: visible; }
.cube-face { fill: #8d9196; font: bold 12px "Open Sans", sans-serif; text-anchor: middle; }
.axis { font: 14px "Noto Sans", sans-serif; text-anchor: middle; }
.axis-x { fill: #ff6b72; }
.axis-y { fill: #7bf07b; }
.axis-z { fill: #7b74f0; }

/* comments and navigation */
.dock {
  display: grid;
  grid-template-columns: 1fr auto 1fr;
  height: 30px;
  padding: 0 4px;
}
.comments { margin-top: 1px; border-top: 0; }
.comments span { flex: 1; margin-left: 20px; }
.navbar { display: flex; height: 24px; padding-right: 3px; background: #f1f1f1; }
.navbar button { width: 26px; }
.navbar .nav-menu { gap: 1px; width: 31px; }
.navbar .nav-menu--wide { gap: 3px; width: 33px; }

/* timeline */
.timeline {
  position: relative;
  display: flex;
  height: 50px;
  border-top: 1px solid #cfcfcf;
  background: #f1f1f1;
}
.playback { display: flex; width: 142px; padding: 5px 0 0 4px; }
.playback button { width: 25px; height: 43px; }
.history { flex: 1; padding-top: 7px; }
.strips, .features { display: grid; grid-template-columns: repeat(72, 24px); }
.strips i { height: 6px; margin: 0 2px; }
.features { margin-top: 2px; }
.features button {
  height: 24px;
  align-items: flex-start;
  background: linear-gradient(#c8c8c8, #c8c8c8) center bottom / 2px 5px no-repeat;
}
.rail { width: 1716px; height: 2px; margin-left: 4px; background: #c8c8c8; }
.settings { width: 44px; height: 48px; padding-top: 6px; }
.scroll-thumb {
  position: absolute;
  top: 0;
  right: 73px;
  width: 23px;
  height: 7px;
  border-radius: 3px;
  background: #c9c9c9;
}
```
FILE: app.js
```js
const icon = (id, cls) => `<svg class="${cls}"><use href="#${id}"/></svg>`;

// Browser tree: [label, icon, visible, colour]
const nodes = [
  ['Document Settings', 't-gear'], ['Named Views', 't-folder'],
  ['Origin', 't-folder', false], ['Analysis', 't-folder', false], ['Bodies', 't-folder', true],
  ['Canvases', 't-folder', false], ['Sketches', 't-folder', false], ['Construction', 't-folder', false],
  ['speaker02:1', 't-body', true, 'pink'], ['AUD BOARD:1', 't-body', true, 'cyan'],
  ['BAT:1', 't-body', true, 'red'], ['LEFT LID:1', 't-body', false, 'yellow'],
  ['speaker02:2', 't-body', true, 'pink'], ['LEFT LID:2', 't-body', true, 'yellow'],
  ['BASE:1', 't-body', true, 'cyan'], ['Middle Pillar:1', 't-body', true, 'purple'],
  ['RIGHT BODY:1', 't-body', true, 'pink'], ['LEFT BODY:1', 't-body', true, 'yellow'],
  ['LID (2):1', 't-body', true, 'orange'], ['LEFT LID:3', 't-body', true, 'yellow'],
  ['LEFT LID:4', 't-body', true, 'yellow'], ['LEFT LID:5', 't-body', true, 'yellow'],
];
document.getElementById('tree').insertAdjacentHTML('beforeend', nodes.map(([label, img, visible, colour]) =>
  `<li>${icon('t-shut', 'expander')}<div class="node${colour ? ' node--part' : ''}">` +
  (colour ? `<i class="bar ${colour}"></i>` : '') +
  (visible === undefined ? '' : icon(visible ? 't-eye' : 't-hidden', 'i16')) +
  `${icon(img, 'i16')}<span>${label}</span></div></li>`).join(''));

// Timeline features, one letter each
const kinds = {
  c: ['r-combine', 'Combine'], s: ['f-sketch', 'Sketch'], y: ['f-copy', 'Component'], e: ['r-extrude', 'Extrude'],
  m: ['r-move', 'Move'], b: ['r-split', 'Split Body'], x: ['f-remove', 'Remove'], p: ['f-plane', 'Plane'],
  h: ['r-chamfer', 'Chamfer'], f: ['r-fillet', 'Fillet'], d: ['r-draft', 'Draft'], j: ['f-joint', 'Joint'],
};
const features = 'csysemmsecsecebxxcbxxcxxxxppmpbbxxchxxxxfddddddddsecddfhmmppbxxxxxcjmjmm';
document.getElementById('features').innerHTML = [...features].map(k =>
  `<button aria-label="${kinds[k][1]}">${icon(kinds[k][0], k === 'h' ? 'i16 flip' : 'i16')}</button>`).join('');

// Component colour strips: [colour, number of features]
const strips = [
  ['magenta', 5], ['orange', 1], ['magenta', 2], ['orange', 1], ['cyan', 1], ['magenta', 2], ['cyan', 14],
  ['magenta', 2], ['cyan', 1], ['magenta', 1], ['cyan', 11], ['orange', 8], ['magenta', 2], ['orange', 4],
  ['cyan', 1], ['purple', 1], ['mixed', 1], ['magenta', 2], ['yellow', 7], ['magenta', 5],
];
document.getElementById('strips').innerHTML = strips.map(([colour, n]) =>
  `<i class="${colour}" style="grid-column:span ${n}"></i>`).join('');
```
